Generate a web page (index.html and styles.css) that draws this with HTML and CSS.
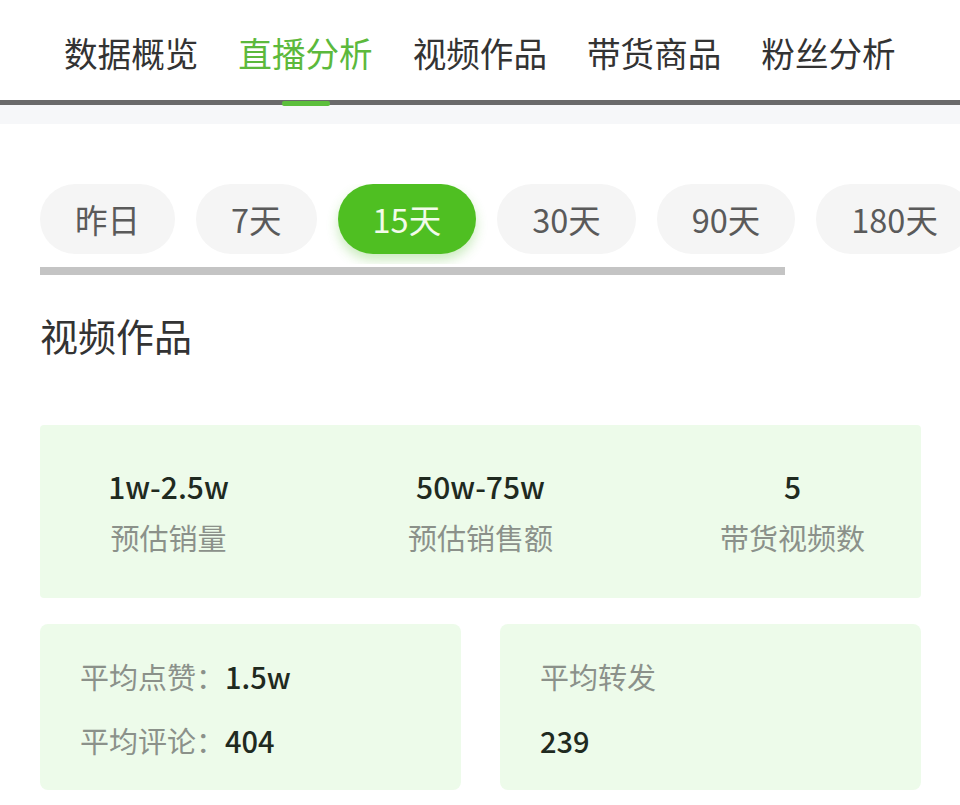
FILE: index.html
```html
<!DOCTYPE html>
<html>
<head>
    <meta content="text/html; charset=UTF-8" http-equiv="content-type">
    <title>视频作品</title>
    <link rel="stylesheet" href="styles.css">
</head>
<body>
    <div class="tabs">
        <a class="tab">数据概览</a>
        <a class="tab active">直播分析</a>
        <a class="tab">视频作品</a>
        <a class="tab">带货商品</a>
        <a class="tab">粉丝分析</a>
    </div>
    <div class="tabs-shade"></div>

    <div class="ranges">
        <span class="pill">昨日</span>
        <span class="pill">7天</span>
        <span class="pill active">15天</span>
        <span class="pill">30天</span>
        <span class="pill">90天</span>
        <span class="pill">180天</span>
    </div>
    <div class="scrollbar"></div>

    <h2>视频作品</h2>

    <div class="summary">
        <div class="stat">
            <div class="value">1w-2.5w</div>
            <div class="label">预估销量</div>
        </div>
        <div class="stat">
            <div class="value">50w-75w</div>
            <div class="label">预估销售额</div>
        </div>
        <div class="stat">
            <div class="value">5</div>
            <div class="label">带货视频数</div>
        </div>
    </div>

    <div class="cards">
        <div class="card">
            <div class="row"><span class="label">平均点赞：</span><span class="value">1.5w</span></div>
            <div class="row"><span class="label">平均评论：</span><span class="value">404</span></div>
        </div>
        <div class="card">
            <div class="row"><span class="label">平均转发</span></div>
            <div class="row"><span class="value">239</span></div>
        </div>
    </div>
</body>
</html>
```

FILE: styles.css
```css
body {
    margin: 0;
    background: #fff;
    color: #333;
    font-family: "Noto Sans CJK SC", "Noto Sans", sans-serif;
    width: 960px;
    overflow: hidden;
}

/* top tabs */
.tabs {
    display: flex;
    align-items: center;
    gap: 40px;
    height: 105px;
    padding: 6px 0 0 64px;
    box-sizing: border-box;
    border-bottom: 5px solid #6a6a6a;
    position: relative;
}

.tab {
    font-size: 33.6px;
    line-height: 46px;
    color: #333;
    position: relative;
}

.tab.active {
    color: #5cb93c;
}

.tab.active::after {
    content: "";
    position: absolute;
    left: 44px;
    top: 71px;
    width: 48px;
    height: 5px;
    background: #5cbf3c;
    border-radius: 2px;
}

.tabs-shade {
    height: 19px;
    background: #f6f7f9;
}

/* time range pills */
.ranges {
    display: flex;
    gap: 21px;
    padding-left: 40px;
    margin-top: 60px;
    white-space: nowrap;
    overflow: hidden;
    padding-bottom: 10px;
    margin-bottom: -10px;
}

.pill {
    flex: none;
    height: 70px;
    line-height: 70px;
    padding: 0 35px;
    border-radius: 35px;
    background: #f5f5f5;
    color: #5a5a5a;
    font-size: 32.5px;
}

.pill.active {
    background: #4fbf22;
    color: #f2fbea;
    box-shadow: 0 6px 12px rgba(80, 190, 40, 0.3);
}

.scrollbar {
    width: 745px;
    height: 8px;
    margin: 13px 0 0 40px;
    background: #c4c4c4;
}

h2 {
    margin: 37px 0 0 40px;
    font-size: 38px;
    line-height: 45px;
    font-weight: normal;
    color: #333;
}

/* summary panel */
.summary {
    display: grid;
    grid-template-columns: repeat(3, 200px);
    column-gap: 112px;
    justify-content: center;
    width: 881px;
    height: 173px;
    margin: 68px 0 0 40px;
    padding-top: 41px;
    box-sizing: border-box;
    background: #edfbea;
    border-radius: 4px;
    text-align: center;
}

.stat .value {
    font-size: 30px;
    line-height: 40px;
    font-weight: 500;
    color: #1f2a1f;
}

.stat .label {
    margin-top: 11px;
    font-size: 29px;
    line-height: 40px;
    color: #8b918a;
}

/* bottom cards */
.cards {
    display: flex;
    gap: 39px;
    margin: 26px 0 0 40px;
    width: 881px;
}

.card {
    flex: 1;
    height: 166px;
    padding: 32px 0 0 40px;
    box-sizing: border-box;
    background: #edfbea;
    border-radius: 8px;
}

.row {
    font-size: 29px;
    line-height: 40px;
    margin-bottom: 24px;
}

.row .label {
    color: #8b918a;
}

.row .value {
    font-weight: 500;
    color: #1f2a1f;
}
```
